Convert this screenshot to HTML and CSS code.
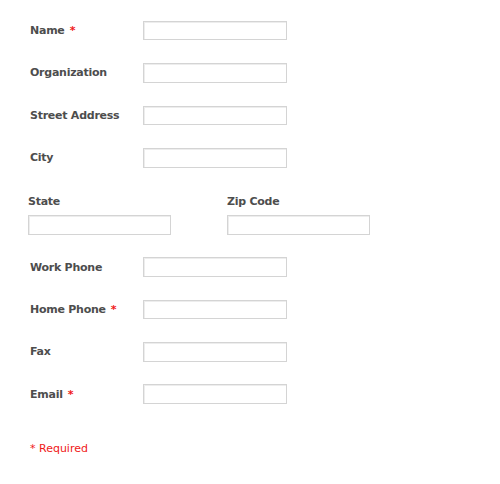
FILE: index.html
```html
<!DOCTYPE html>
<html lang="en">
<head>
    <meta charset="UTF-8">
    <meta name="viewport" content="width=device-width, initial-scale=1.0">
    <title>Contact Form</title>
    <link rel="stylesheet" href="styles.css">
</head>
<body>
    <form class="form">
        <div class="row">
            <label class="label" for="name">Name <span class="req">*</span></label>
            <input class="field" type="text" id="name">
        </div>
        <div class="row">
            <label class="label" for="org">Organization</label>
            <input class="field" type="text" id="org">
        </div>
        <div class="row">
            <label class="label" for="street">Street Address</label>
            <input class="field" type="text" id="street">
        </div>
        <div class="row">
            <label class="label" for="city">City</label>
            <input class="field" type="text" id="city">
        </div>

        <div class="split">
            <div class="col">
                <label class="label" for="state">State</label>
                <input class="field" type="text" id="state">
            </div>
            <div class="col">
                <label class="label" for="zip">Zip Code</label>
                <input class="field" type="text" id="zip">
            </div>
        </div>

        <div class="row">
            <label class="label" for="work">Work Phone</label>
            <input class="field" type="text" id="work">
        </div>
        <div class="row">
            <label class="label" for="home">Home Phone <span class="req">*</span></label>
            <input class="field" type="text" id="home">
        </div>
        <div class="row">
            <label class="label" for="fax">Fax</label>
            <input class="field" type="text" id="fax">
        </div>
        <div class="row">
            <label class="label" for="email">Email <span class="req">*</span></label>
            <input class="field" type="text" id="email">
        </div>

        <p class="note">* Required</p>
    </form>
</body>
</html>
```

FILE: styles.css
```css
body {
    margin: 0;
    padding: 9.4px 0 0 0;
    background: #fff;
    font-family: 'DejaVu Sans', Verdana, sans-serif;
    font-size: 11px;
    color: #4d4d4d;
}
.form {
    width: 500px;
}
.row {
    display: flex;
    align-items: center;
    padding: 11.4px 0 11.4px 30px;
}
.row .label {
    width: 113px;
}
.label {
    font-weight: bold;
    line-height: 13px;
    letter-spacing: -0.25px;
}
.req {
    margin-left: 1.5px;
    color: #f01818;
    letter-spacing: 0;
}
.field {
    box-sizing: border-box;
    width: 144px;
    height: 19.6px;
    margin: 0;
    padding: 2px 4px;
    border: 1px solid #d4d4d4;
    box-shadow: inset 1px 1px 0 #ededed;
    background: #fff;
    font: inherit;
}
.split {
    display: flex;
    gap: 56px;
    padding: 16.6px 0 11.4px 28px;
}
.col {
    display: flex;
    flex-direction: column;
    gap: 6.5px;
}
.col .field {
    width: 143px;
}
.note {
    margin: 27px 0 0 30px;
    color: #f01818;
    font-size: 11px;
    line-height: 13px;
}
```
